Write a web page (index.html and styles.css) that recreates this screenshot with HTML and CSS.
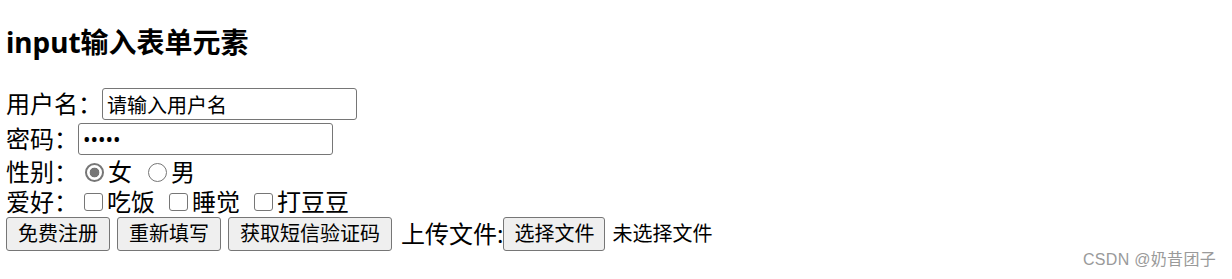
FILE: index.html
```html
<!DOCTYPE html>
<html lang="zh-CN">
<head>
<meta charset="utf-8">
<title>input输入表单元素</title>
<link rel="stylesheet" href="styles.css">
</head>
<body>
<h3 class="title">input输入表单元素</h3>
<form class="form">
  <div class="row row-user">
    <label class="label">用户名：</label>
    <input class="text-input" type="text" value="请输入用户名">
  </div>
  <div class="row row-pass">
    <label class="label">密码：</label>
    <input class="text-input" type="password" value="12345">
  </div>
  <div class="row row-sex">
    <span class="label">性别：</span>
    <span class="opt opt-radio opt-first"><input class="radio" type="radio" name="sex" checked><span class="opt-text">女</span></span>
    <span class="opt opt-radio"><input class="radio" type="radio" name="sex"><span class="opt-text">男</span></span>
  </div>
  <div class="row row-hobby">
    <span class="label">爱好：</span>
    <span class="opt opt-check opt-first"><input class="check" type="checkbox"><span class="opt-text">吃饭</span></span>
    <span class="opt opt-check"><input class="check" type="checkbox"><span class="opt-text">睡觉</span></span>
    <span class="opt opt-check"><input class="check" type="checkbox"><span class="opt-text">打豆豆</span></span>
  </div>
  <div class="row row-buttons">
    <button class="btn" type="submit">免费注册</button>
    <button class="btn" type="reset">重新填写</button>
    <button class="btn" type="button">获取短信验证码</button>
    <span class="upload-label">上传文件:</span>
    <button class="btn btn-file" type="button">选择文件</button>
    <span class="file-status">未选择文件</span>
  </div>
</form>
<div class="watermark">CSDN @奶昔团子</div>
</body>
</html>
```
FILE: styles.css
```css
html, body {
  margin: 0;
  padding: 0;
}

body {
  position: relative;
  width: 1232px;
  height: 279px;
  overflow: hidden;
  background: #ffffff;
  color: #000000;
  font-family: "Noto Sans", "Noto Sans CJK SC", sans-serif;
  padding-left: 6px;
  box-sizing: border-box;
}

.title {
  margin: 28px 0 0 0;
  font-size: 28px;
  line-height: 28px;
  height: 28px;
  font-weight: 700;
}

.form {
  margin-top: 30px;
  display: flex;
  flex-direction: column;
}

.row {
  display: flex;
  align-items: center;
  font-size: 24px;
  line-height: 1;
}

.row-user { height: 36px; }
.row-pass { height: 34px; }
.row-sex { height: 32px; }
.row-hobby { height: 28px; }
.row-buttons { height: 36px; }

.label {
  white-space: nowrap;
}

.text-input {
  box-sizing: border-box;
  width: 255px;
  height: 32px;
  margin: 0;
  padding: 0 4px;
  border: 1px solid #767676;
  border-radius: 3px;
  background: #ffffff;
  font-family: "Noto Sans", "Noto Sans CJK SC", sans-serif;
  font-size: 20px;
  color: #000000;
  outline: none;
}

.opt {
  display: flex;
  align-items: center;
}

.opt-radio { margin-left: 16px; }
.opt-check { margin-left: 14px; }
.opt-radio.opt-first { margin-left: 7px; }
.opt-check.opt-first { margin-left: 6px; }

.opt-text {
  margin-left: 4px;
}

.radio {
  appearance: none;
  -webkit-appearance: none;
  box-sizing: border-box;
  width: 19px;
  height: 19px;
  margin: 0;
  border: 1px solid #767676;
  border-radius: 50%;
  background: #ffffff;
}

.radio:checked {
  border: 2px solid #767676;
  background: radial-gradient(circle, #767676 0 4.5px, #ffffff 5.2px);
}

.check {
  appearance: none;
  -webkit-appearance: none;
  box-sizing: border-box;
  width: 19px;
  height: 18px;
  margin: 0;
  border: 1px solid #767676;
  border-radius: 3px;
  background: #ffffff;
}

.btn {
  box-sizing: border-box;
  height: 34px;
  margin: 0 7px 0 0;
  padding: 0 11px;
  border: 1px solid #767676;
  border-radius: 3px;
  background: #efefef;
  color: #000000;
  font-family: "Noto Sans", "Noto Sans CJK SC", sans-serif;
  font-size: 20px;
  line-height: 1;
  white-space: nowrap;
}

.upload-label {
  margin-left: 2px;
}

.btn-file {
  padding: 0 10px;
  margin-right: 0;
}

.file-status {
  margin-left: 7px;
  font-size: 20px;
}

.watermark {
  position: absolute;
  right: 16px;
  top: 250px;
  font-family: "Liberation Sans", "Noto Sans CJK SC", sans-serif;
  font-size: 16px;
  line-height: 20px;
  color: #9a9a9a;
  letter-spacing: 0.3px;
}
```
